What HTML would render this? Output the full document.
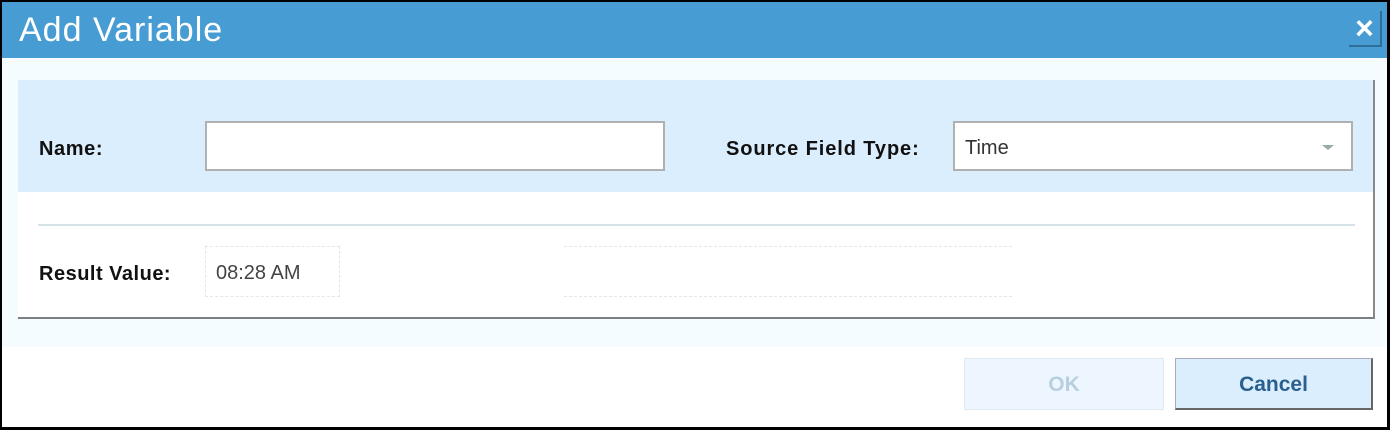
<!DOCTYPE html>
<html><head><style>
*{box-sizing:border-box;margin:0;padding:0}
body{width:1390px;height:430px;position:relative;overflow:hidden;background:#fff;font-family:"Liberation Sans",sans-serif}
.a{position:absolute}
.l{font-size:20px;font-weight:bold;color:#111;letter-spacing:0.6px}
</style></head><body>
<div class="a" style="left:0;top:0;width:1390px;height:430px;border:2px solid #000;border-right-width:3px;border-bottom-width:3px"></div>
<div class="a" style="left:2px;top:2px;width:1385px;height:56px;background:#479dd3"></div>
<div class="a" style="left:19px;top:11px;color:#fff;font-size:34px;letter-spacing:1px">Add Variable</div>
<div class="a" style="left:1349px;top:11px;width:33px;height:36px;border-right:2px solid #2e6f9a;border-bottom:2px solid #2e6f9a;color:#fff;font-size:32px;line-height:34px;text-align:center;font-weight:bold">×</div>
<div class="a" style="left:2px;top:58px;width:1385px;height:289px;background:#f5fcff"></div>
<div class="a" style="left:18px;top:80px;width:1357px;height:239px;background:#fff;border-right:2px solid #888;border-bottom:2px solid #7b7f83"></div>
<div class="a" style="left:18px;top:80px;width:1355px;height:112px;background:#dbeefd"></div>
<div class="a l" style="left:39px;top:138px">Name:</div>
<div class="a" style="left:205px;top:121px;width:460px;height:50px;background:#fff;border:2px solid #b0b0b0"></div>
<div class="a l" style="left:726px;top:138px;letter-spacing:0.9px">Source Field Type:</div>
<div class="a" style="left:953px;top:121px;width:400px;height:50px;background:#fff;border:2px solid #b0b0b0;padding:14px 10px;font-size:20px;color:#333">Time</div>
<div class="a" style="left:1322px;top:145px;width:0;height:0;border-left:6px solid transparent;border-right:6px solid transparent;border-top:5px solid #9aa"></div>
<div class="a" style="left:38px;top:224px;width:1317px;height:2px;background:#d5e3e8"></div>
<div class="a l" style="left:39px;top:263px;letter-spacing:0.5px">Result Value:</div>
<div class="a" style="left:205px;top:246px;width:135px;height:51px;border:1px dashed #e6e6e6;padding:15px 10px;font-size:20px;color:#444">08:28 AM</div>
<div class="a" style="left:564px;top:246px;width:448px;height:51px;border-top:1px dashed #e6e6e6;border-bottom:1px dashed #e6e6e6"></div>
<div class="a" style="left:964px;top:358px;width:200px;height:52px;background:#edf6fe;border:1px solid #dde9f2;color:#b8cfe0;font-size:21px;font-weight:bold;text-align:center;line-height:52px">OK</div>
<div class="a" style="left:1175px;top:358px;width:198px;height:52px;background:#dbeefd;border:1px solid #aab;border-right:2px solid #666;border-bottom:2px solid #666;color:#2b5f8e;font-size:21px;font-weight:bold;text-align:center;line-height:52px">Cancel</div>
</body></html>
